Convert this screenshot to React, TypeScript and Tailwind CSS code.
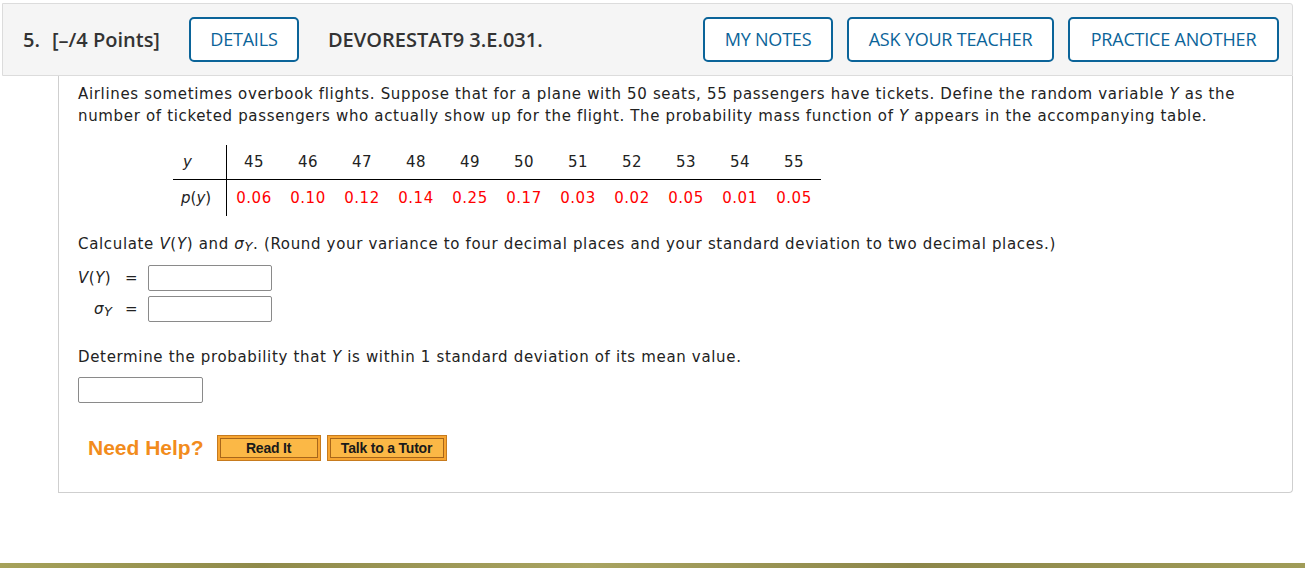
const ys = [45, 46, 47, 48, 49, 50, 51, 52, 53, 54, 55];
const ps = ["0.06", "0.10", "0.12", "0.14", "0.25", "0.17", "0.03", "0.02", "0.05", "0.01", "0.05"];

function HeaderButton({ children, className }: { children: string; className?: string }) {
  return (
    <button
      className={
        "h-[45px] rounded-[5px] border-2 border-[#0b6499] bg-white text-[18px] font-medium tracking-[-0.2px] text-[#0b6499] " +
        (className ?? "")
      }
    >
      {children}
    </button>
  );
}

function HelpButton({ children, className }: { children: string; className?: string }) {
  return (
    <button
      className={
        "h-[26px] border border-[#c77b1e] bg-[#f7a531] p-[2px] " + (className ?? "")
      }
    >
      <span className="flex h-full items-center justify-center border border-[#a8661a] bg-[#fbb846] font-['Liberation_Sans',Arial,sans-serif] text-[14px] font-bold tracking-[-0.2px] text-[#1a1a1a]">
        {children}
      </span>
    </button>
  );
}

export default function App() {
  return (
    <div className="relative h-[568px] w-[1305px] overflow-hidden bg-white font-['DejaVu_Sans',Verdana,sans-serif] text-[#222]">
      <div className="pl-[2px] pr-[12px] pt-[3px]">
        <div className="flex h-[73px] items-center rounded-tr-[3px] border border-[#dcdcdc] bg-[#f5f5f5] pl-[20px] font-['Open_Sans',sans-serif]">
          <span className="text-[20px] font-semibold text-[#333]">5.</span>
          <span className="ml-[12px] text-[20px] font-semibold text-[#333]">[–/4 Points]</span>
          <HeaderButton className="ml-[29px] w-[110px]">DETAILS</HeaderButton>
          <span className="ml-[29px] text-[20px] font-semibold text-[#333]">DEVORESTAT9 3.E.031.</span>
          <HeaderButton className="ml-auto w-[130px]">MY NOTES</HeaderButton>
          <HeaderButton className="ml-[14px] w-[207px]">ASK YOUR TEACHER</HeaderButton>
          <HeaderButton className="ml-[14px] mr-[13px] w-[211px]">PRACTICE ANOTHER</HeaderButton>
        </div>
      </div>

      <div className="ml-[58px] mr-[12px] h-[417px] rounded-br-[4px] border-b border-l border-r border-[#cfcfcf] pl-[19px] pr-[20px] pt-[7px] text-[15px] leading-[22px] tracking-[0.66px]">
        <p>
          Airlines sometimes overbook flights. Suppose that for a plane with 50 seats, 55 passengers have tickets. Define the random variable <i>Y</i> as the number of ticketed passengers who actually show up for the flight. The probability mass function of <i>Y</i> appears in the accompanying table.
        </p>

        <div className="ml-[95px] mt-[18px] w-[648px] tracking-[0.5px]">
          <div className="flex h-[35px] items-center border-b border-black">
            <div className="flex h-full w-[54px] items-center border-r border-black pl-[10px] italic">y</div>
            {ys.map((y) => (
              <div key={y} className="w-[54px] text-center">{y}</div>
            ))}
          </div>
          <div className="flex h-[36px] items-center">
            <div className="flex h-full w-[54px] items-center border-r border-black pl-[8px] tracking-normal">
              <i>p</i>(<i>y</i>)
            </div>
            {ps.map((p, i) => (
              <div key={i} className="w-[54px] text-center text-[#ff0000]">{p}</div>
            ))}
          </div>
        </div>

        <p className="mt-[17px]">
          Calculate <i>V</i>(<i>Y</i>) and <i>σ</i><sub className="relative top-[2px] text-[13px]"><i>Y</i></sub>. (Round your variance to four decimal places and your standard deviation to two decimal places.)
        </p>

        <div className="mt-[10px] grid w-fit grid-cols-[auto_auto] items-center gap-x-[10px] gap-y-[5px] tracking-[0.5px]">
          <div className="flex w-[60px] justify-between">
            <span><i>V</i>(<i>Y</i>)</span>
            <span>=</span>
          </div>
          <div className="h-[26px] w-[124px] rounded-[2px] border border-[#8a8a8a]"></div>
          <div className="flex w-[60px] items-center justify-between pl-[16px]">
            <span>
              <i>σ</i><sub className="relative top-[2px] text-[13px]"><i>Y</i></sub>
            </span>
            <span>=</span>
          </div>
          <div className="h-[26px] w-[124px] rounded-[2px] border border-[#8a8a8a]"></div>
        </div>

        <p className="mt-[24px]">
          Determine the probability that <i>Y</i> is within 1 standard deviation of its mean value.
        </p>

        <div className="mt-[9px] h-[26px] w-[125px] rounded-[2px] border border-[#8a8a8a]"></div>

        <div className="ml-[10px] mt-[32px] flex items-center tracking-normal">
          <span className="font-['Liberation_Sans',Arial,sans-serif] text-[21px] font-bold text-[#f28c1c]">Need Help?</span>
          <HelpButton className="ml-[13px] w-[104px]">Read It</HelpButton>
          <HelpButton className="ml-[6px] w-[120px]">Talk to a Tutor</HelpButton>
        </div>
      </div>

      <div className="absolute bottom-0 left-0 h-[5px] w-full bg-[linear-gradient(90deg,#a6a25a,#8f8a4a_20%,#a9a461_45%,#8c8649_70%,#a09c58)]"></div>
    </div>
  );
}
